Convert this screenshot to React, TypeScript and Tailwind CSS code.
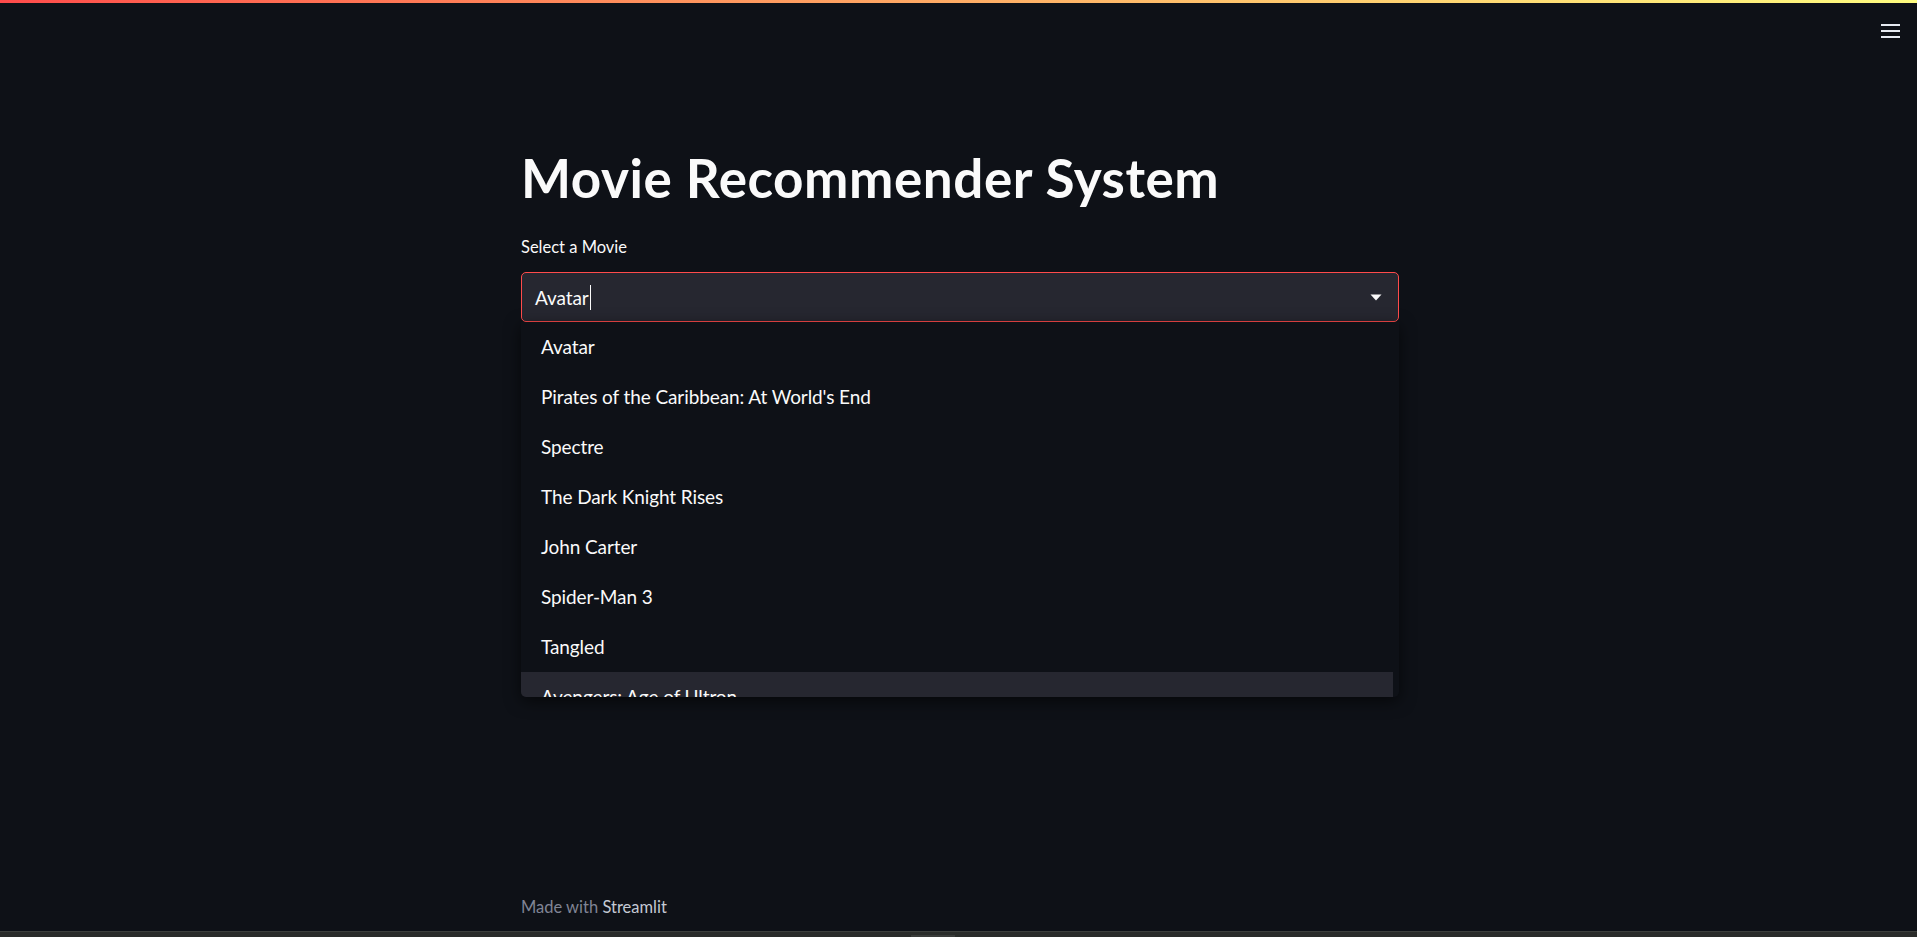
import React from 'react';

const movies = [
  'Avatar',
  "Pirates of the Caribbean: At World's End",
  'Spectre',
  'The Dark Knight Rises',
  'John Carter',
  'Spider-Man 3',
  'Tangled',
  'Avengers: Age of Ultron',
];

const font = { fontFamily: '"Source Sans Pro", Lato, "Noto Sans", sans-serif' };

function TriangleDown() {
  return (
    <svg width="12" height="7" viewBox="0 0 12 7" className="block">
      <path d="M0.5 0.5 H11.5 L6 6.5 Z" fill="#fafafa" />
    </svg>
  );
}

function MovieSelect() {
  return (
    <div className="relative">
      {/* input box */}
      <div className="h-[50px] rounded-[5px] border border-[#ff4b4b] bg-[#262730] flex items-center pl-[13px] pr-[16px]">
        <span className="text-[19px] tracking-[-0.1px] text-[#fafafa] leading-none">Avatar</span>
        <span className="ml-[1px] w-px h-[25px] bg-[#fafafa]" />
        <div className="flex-1" />
        <TriangleDown />
      </div>

      {/* dropdown menu */}
      <div className="absolute left-0 top-full w-[878px] h-[375px] overflow-hidden rounded-b-[5px] bg-[#0e1117] shadow-[0_4px_16px_rgba(0,0,0,0.6)] z-10">
        <ul className="w-[872px]">
          {movies.map((m, i) => (
            <li
              key={m}
              className={`h-[50px] flex items-center pl-[20px] text-[19px] tracking-[-0.1px] text-[#fafafa] ${
                i === movies.length - 1 ? 'bg-[#262730]' : ''
              }`}
            >
              {m}
            </li>
          ))}
        </ul>
      </div>
    </div>
  );
}

export default function App() {
  return (
    <div className="relative h-[937px] w-full overflow-hidden bg-[#0e1117] flex flex-col" style={font}>
      {/* decoration bar */}
      <div className="absolute top-0 left-0 right-0 h-[3px] bg-gradient-to-r from-[#ff4b4b] to-[#fffd80]" />

      {/* hamburger menu */}
      <button className="absolute top-[24px] right-[17px] flex flex-col gap-[4px] w-[19px]">
        <span className="h-[2px] w-full bg-[#e6eaf1]" />
        <span className="h-[2px] w-full bg-[#e6eaf1]" />
        <span className="h-[2px] w-full bg-[#e6eaf1]" />
      </button>

      <main className="flex-1 flex justify-center pl-[3px]">
        <div className="w-[878px] pt-[148px]">
          <h1 className="text-[53px] font-bold leading-[60px] text-[#fafafa] tracking-[0.55px]">
            Movie Recommender System
          </h1>
          <label className="block mt-[27px] text-[16.5px] leading-[24px] text-[#fafafa]">Select a Movie</label>
          <div className="mt-[13px]">
            <MovieSelect />
          </div>
        </div>
      </main>

      <footer className="flex justify-center pl-[3px] pb-[12px]">
        <div className="w-[878px]">
          <span className="text-[16.5px] leading-[24px] text-[#808495]">
            Made with <span className="text-[#c4c9d4]">Streamlit</span>
          </span>
        </div>
      </footer>

      {/* bottom edge */}
      <div className="h-[6px] border-t border-[#3c3f3c] bg-[#2a2c2a] flex justify-center">
        <div className="ml-[-52px] mt-[3px] w-[44px] h-[2px] bg-[#3a3c3a]" />
      </div>
    </div>
  );
}
